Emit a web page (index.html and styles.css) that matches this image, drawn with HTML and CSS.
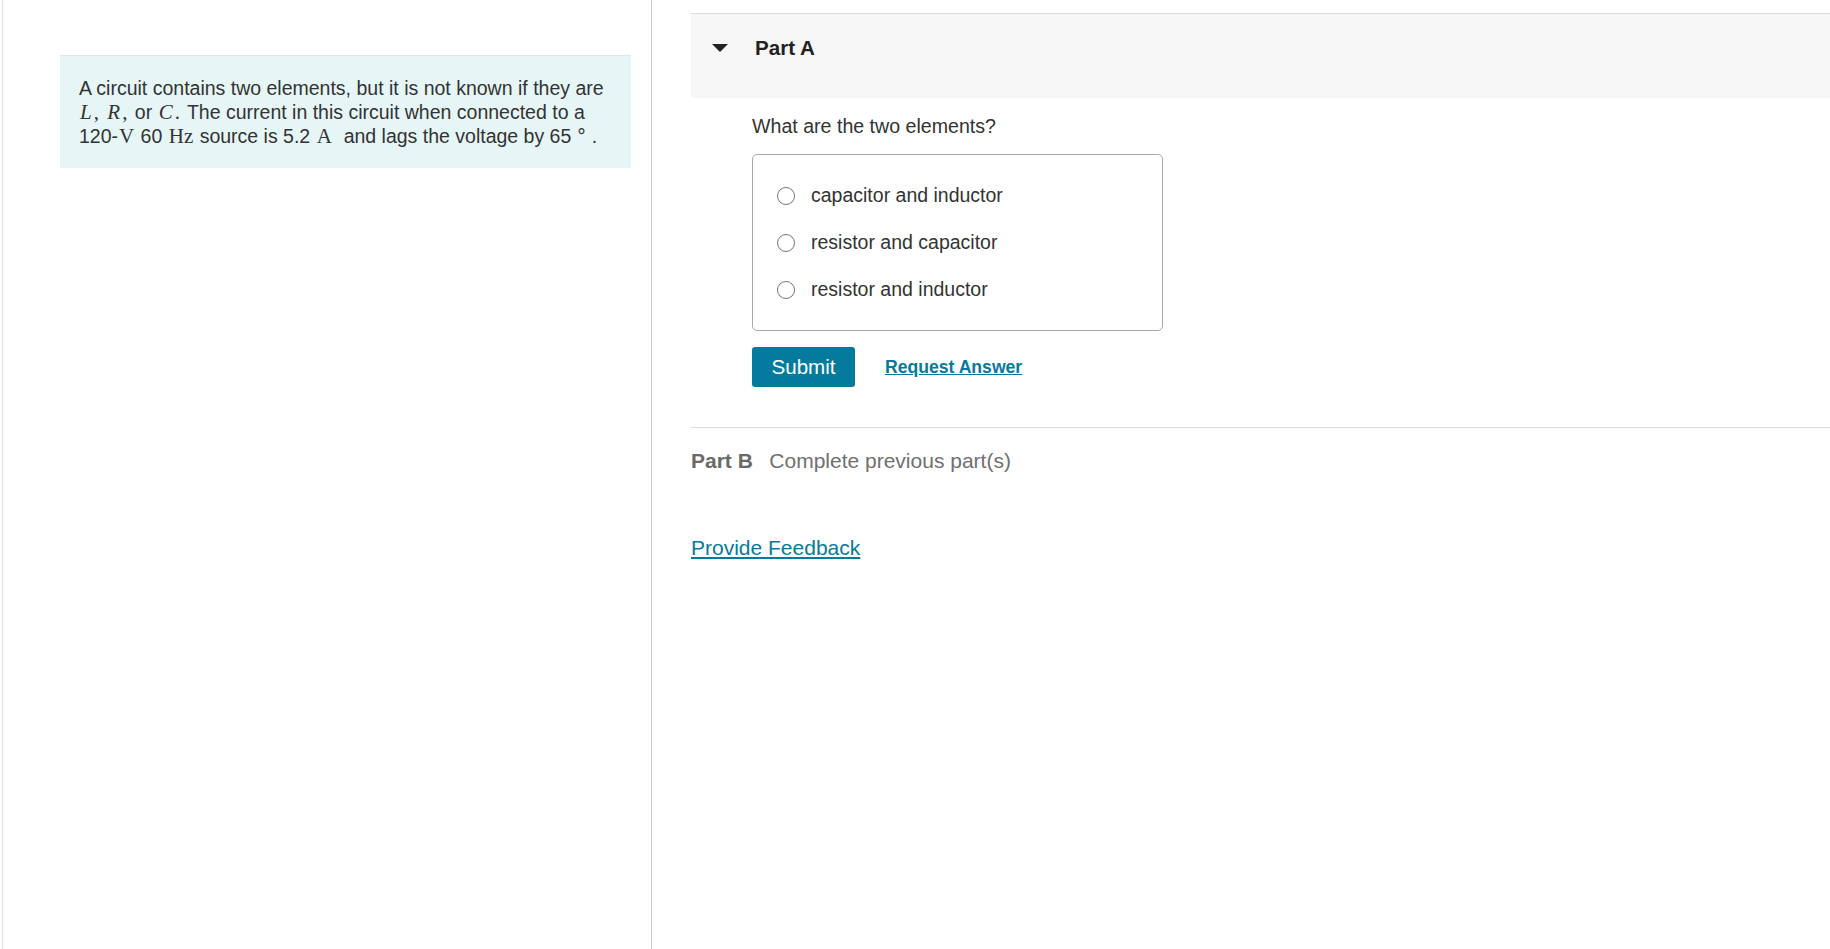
FILE: index.html
```html
<!DOCTYPE html>
<html>
<head>
    <meta charset="UTF-8">
    <title>Part A - Circuit Elements</title>
    <link rel="stylesheet" href="styles.css">
</head>
<body>

<div class="page">
    <!-- Problem statement column -->
    <div class="intro">
        <div class="info-box">
            A circuit contains two elements, but it is not known if they are<br>
            <span class="mi">L</span><span class="mo">,</span> <span class="mi">R</span><span class="mo">,</span> or <span class="mi">C</span><span class="mo">.</span> The current in this circuit when connected to a<br>
            120-<span class="mr">V</span> 60 <span class="mr">Hz</span> source is 5.2 <span class="mr">A</span> &nbsp;and lags the voltage by 65 <span class="deg">&deg;</span> .
        </div>
    </div>

    <!-- Parts column -->
    <div class="parts">
        <div class="part-header">
            <svg class="caret" width="16" height="8" viewBox="0 0 16 8"><path d="M0 0 L16 0 L8 8 Z" fill="#222"/></svg>
            <span class="part-title">Part A</span>
        </div>

        <div class="part-body">
            <p class="question">What are the two elements?</p>

            <div class="choices">
                <label class="choice"><span class="radio"></span>capacitor and inductor</label>
                <label class="choice"><span class="radio"></span>resistor and capacitor</label>
                <label class="choice"><span class="radio"></span>resistor and inductor</label>
            </div>

            <div class="actions">
                <button class="submit-btn">Submit</button>
                <a href="#" class="request-link">Request Answer</a>
            </div>
        </div>

        <div class="part-locked">
            <span class="locked-title">Part B</span>
            <span class="locked-note">Complete previous part(s)</span>
        </div>

        <a href="#" class="feedback-link">Provide Feedback</a>
    </div>
</div>

</body>
</html>
```

FILE: styles.css
```css
body {
    margin: 0;
    padding: 0;
    font-family: "Liberation Sans", Arial, Helvetica, sans-serif;
    color: #333;
    background-color: #fff;
}

.page {
    display: flex;
    height: 949px;
    margin-left: 2px;
    border-left: 1px solid #dedede;
    overflow: hidden;
}

/* Left column with the problem text */
.intro {
    width: 649px;
    flex-shrink: 0;
    border-right: 1px solid #c4cfdf;
    padding: 55px 20px 0 57px;
    box-sizing: border-box;
}

.info-box {
    background-color: #e6f5f6;
    border-top: 1px solid #dfe6e7;
    padding: 20px 10px 20px 19px;
    font-size: 19.5px;
    line-height: 24px;
    white-space: nowrap;
}

.mi {
    font-family: "Liberation Serif", "Times New Roman", serif;
    font-style: italic;
    font-size: 21px;
    margin: 0 2px 0 1px;
}

.mr, .mo {
    font-family: "Liberation Serif", "Times New Roman", serif;
    font-size: 21px;
}

.mr {
    margin: 0 1px;
}

.mo {
    margin-right: 2px;
}

.deg {
    font-family: "DejaVu Sans", sans-serif;
    font-size: 19px;
}

/* Right column */
.parts {
    flex: 1;
    padding: 13px 0 0 39px;
}

.part-header {
    display: flex;
    align-items: center;
    background-color: #f7f7f7;
    border-top: 1px solid #dcdcdc;
    padding: 22px 0 38px 21px;
    height: 24px;
}

.caret {
    margin-right: 27px;
}

.part-title {
    font-size: 20.6px;
    font-weight: bold;
    color: #222;
}

.part-body {
    padding: 16px 0 40px 61px;
    border-bottom: 1px solid #dcdcdc;
}

.question {
    margin: 0 0 16px 0;
    font-size: 19.6px;
    line-height: 24px;
}

.choices {
    width: 411px;
    box-sizing: border-box;
    border: 1px solid #a9a9a9;
    border-radius: 5px;
    padding: 17px 0 17px 24px;
}

.choice {
    display: flex;
    align-items: center;
    height: 47px;
    font-size: 19.5px;
    cursor: pointer;
}

.radio {
    width: 16px;
    height: 16px;
    border: 1.5px solid #767676;
    border-radius: 50%;
    margin-right: 16px;
    flex-shrink: 0;
}

.actions {
    display: flex;
    align-items: center;
    margin-top: 16px;
}

.submit-btn {
    background-color: #047b9c;
    color: white;
    border: none;
    border-radius: 3px;
    font-family: "Liberation Sans", Arial, sans-serif;
    font-size: 20.6px;
    width: 103px;
    height: 40px;
    padding: 0;
    margin-right: 30px;
    cursor: pointer;
}

.submit-btn:hover {
    opacity: 0.8;
}

.request-link {
    color: #047b9c;
    font-weight: bold;
    font-size: 17.6px;
    text-decoration: underline;
}

.part-locked {
    padding-top: 21px;
    line-height: 24px;
    color: #707070;
}

.locked-title {
    font-size: 21px;
    font-weight: bold;
    color: #6a6a6a;
    margin-right: 12px;
}

.locked-note {
    font-size: 21px;
}

.feedback-link {
    display: inline-block;
    margin-top: 61px;
    line-height: 24px;
    font-size: 21px;
    color: #047b9c;
    text-decoration: underline;
}
```
